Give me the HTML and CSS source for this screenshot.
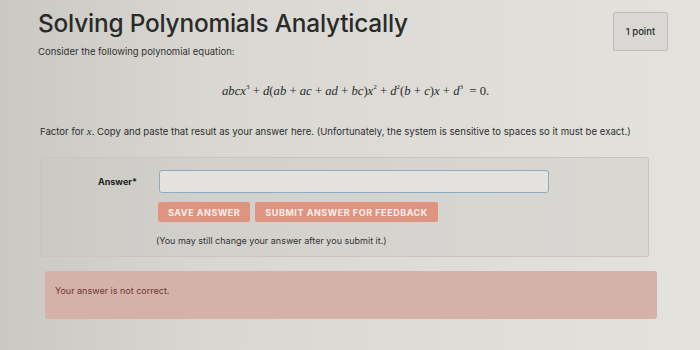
FILE: index.html
```html
<!DOCTYPE html>
<html lang="en">
  <head>
    <meta charset="UTF-8" />
    <title>Solving Polynomials Analytically</title>
    <link rel="stylesheet" href="styles.css">
  </head>
  <body>
    <div class="page">
      <div class="header">
        <h1>Solving Polynomials Analytically</h1>
        <div class="points">1 point</div>
      </div>
      <p class="intro">Consider the following polynomial equation:</p>

      <div class="equation">
        <i>abcx</i><sup>3</sup> + <i>d</i>(<i>ab</i> + <i>ac</i> + <i>ad</i> + <i>bc</i>)<i>x</i><sup>2</sup>
        + <i>d</i><sup>2</sup>(<i>b</i> + <i>c</i>)<i>x</i> + <i>d</i><sup>3</sup> &nbsp;= 0.
      </div>

      <p class="task">Factor for <i class="var">x</i>. Copy and paste that result as your answer here. (Unfortunately, the system is sensitive to spaces so it must be exact.)</p>

      <div class="answer-panel">
        <div class="answer-row">
          <label for="answer">Answer*</label>
          <input type="text" id="answer" />
        </div>
        <div class="buttons">
          <button type="button">Save answer</button>
          <button type="button">Submit answer for feedback</button>
        </div>
        <p class="note">(You may still change your answer after you submit it.)</p>
      </div>

      <div class="feedback">Your answer is not correct.</div>
    </div>
  </body>
</html>
```

FILE: styles.css
```css
body {
  margin: 0;
  height: 350px;
  overflow: hidden;
  font-family: Inter, "Noto Sans", sans-serif;
  color: #2c2c2c;
  background: linear-gradient(90deg, #c9c8c2 0%, #d8d7d1 30%, #dedcd7 60%, #e3e2dd 100%);
}

.page {
  padding: 0 32px 0 38px;
}

.header {
  display: flex;
  justify-content: space-between;
  align-items: flex-start;
}

h1 {
  margin: 8px 0 0;
  font-size: 24.4px;
  line-height: 30px;
  font-weight: 500;
  letter-spacing: -0.2px;
  color: #2a2a2a;
}

.points {
  margin-top: 12px;
  margin-bottom: -20px;
  width: 55px;
  height: 39px;
  box-sizing: border-box;
  border: 1px solid #bdbcb8;
  border-radius: 2px;
  background: #d9d8d4;
  font-size: 9.5px;
  font-weight: 500;
  display: flex;
  align-items: center;
  justify-content: center;
}

.intro {
  margin: 8px 0 0;
  font-size: 9.5px;
  color: #333;
}

.equation {
  margin: 27px 0 0 184px;
  font-family: "Liberation Serif", serif;
  font-size: 12.7px;
  color: #2a2a2a;
}

.equation sup {
  font-size: 7px;
  vertical-align: 6px;
  line-height: 0;
}

.task {
  margin: 26px 0 0 2px;
  font-size: 9.6px;
  color: #2f2f2f;
}

.task .var {
  font-family: "Liberation Serif", serif;
  font-size: 11px;
}

.answer-panel {
  margin: 20px 19px 0 2px;
  height: 100px;
  box-sizing: border-box;
  border: 1px solid #c6c5c0;
  border-radius: 3px;
  background: rgba(200, 199, 194, 0.35);
  padding: 12px 0 0 117px;
}

.answer-row {
  display: flex;
  align-items: center;
}

label {
  width: 61px;
  margin-left: -60px;
  font-size: 9px;
  font-weight: 700;
  color: #222;
}

input[type="text"] {
  width: 390px;
  height: 23px;
  box-sizing: border-box;
  border: 1.5px solid #8eabc2;
  border-radius: 3px;
  background: #e3e2de;
  padding: 0 8px;
}

.buttons {
  display: flex;
  gap: 5px;
  margin-top: 9px;
}

button {
  height: 20px;
  padding: 0 10px;
  border: none;
  border-radius: 2px;
  background-color: #df9381;
  color: #fbf0ec;
  font-family: Inter, "Noto Sans", sans-serif;
  font-size: 9px;
  font-weight: 700;
  letter-spacing: 0.55px;
  text-transform: uppercase;
}

.note {
  margin: 13px 0 0 -2px;
  font-size: 9px;
  color: #333;
}

.feedback {
  margin: 14px 11px 0 7px;
  height: 48px;
  box-sizing: border-box;
  border-radius: 3px;
  background: #d5b2a9;
  padding: 14px 10px;
  font-size: 9px;
  color: #703833;
}
```
